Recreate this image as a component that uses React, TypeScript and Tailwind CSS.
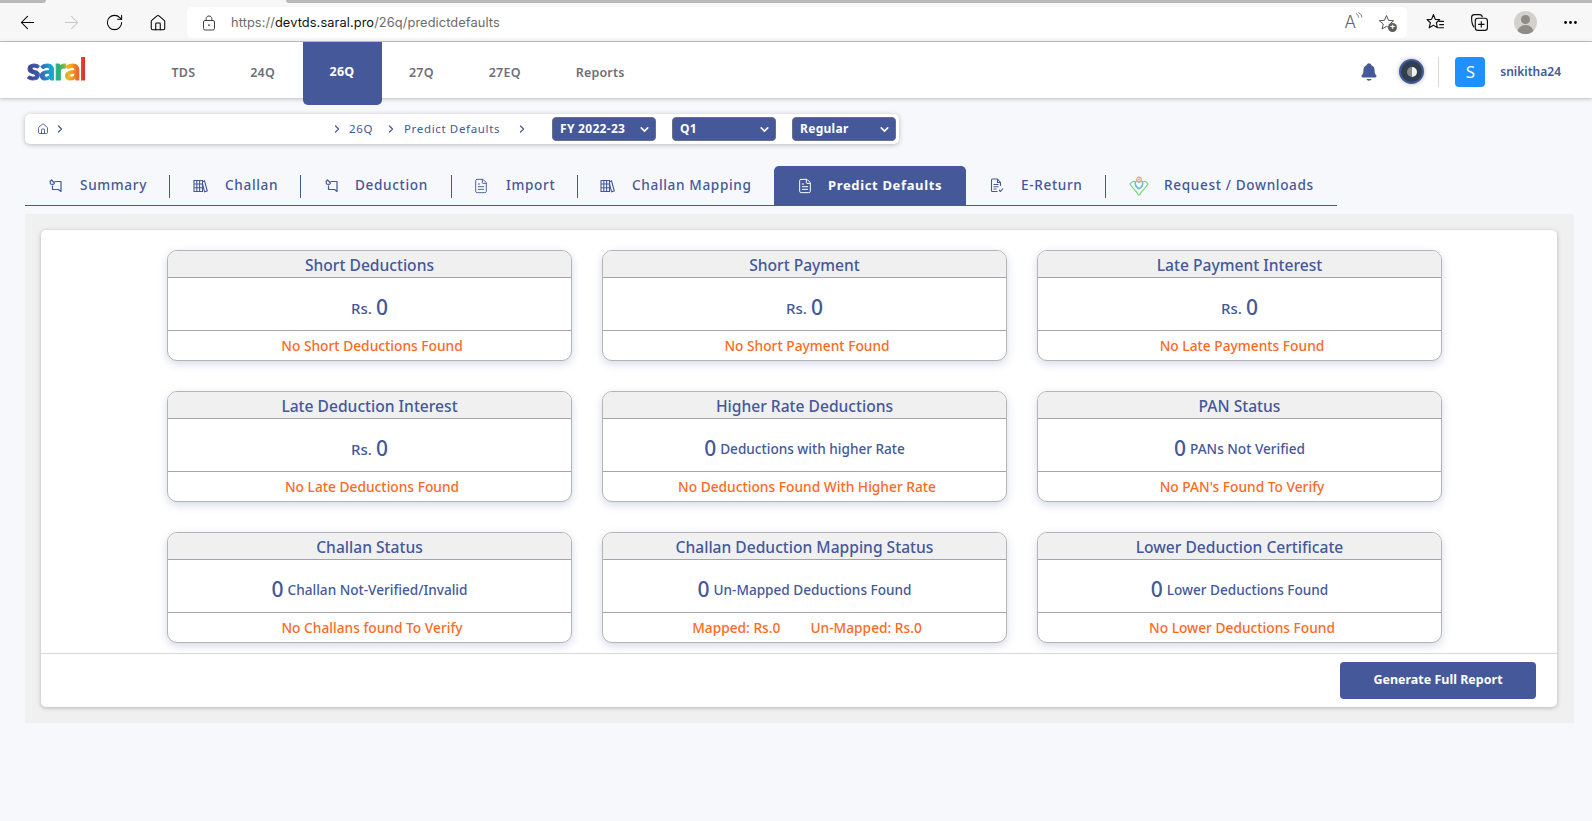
import React from "react";
import { ArrowLeft, ArrowRight, RotateCw, House, ChevronRight, ChevronDown, Ellipsis, FileText } from "lucide-react";
import { IoNotifications } from "react-icons/io5";

function SummaryIcon({ className }: { className?: string }) {
  return (
    <svg viewBox="0 0 14 14" className={className} fill="none" stroke="currentColor" strokeWidth="1.2" strokeLinejoin="round">
      <path d="M1 2.500 2.500 1 5.500 4 4 5.500 1.500 5Z" />
      <path d="M5.500 2.500H12V12.500L9.500 10.500H3.500V6.500" />
    </svg>
  );
}

function BooksIcon({ className }: { className?: string }) {
  return (
    <svg viewBox="0 0 15 14" className={className} fill="none" stroke="currentColor" strokeWidth="1.1">
      <path d="M1 1.500H9.500V12.500H1Z" />
      <path d="M3.800 1.500V12.500M6.600 1.500V12.500M1 5H9.500M1 8.800H9.500" />
      <path d="M9.500 3 11.500 1.800 14.300 12 11.600 12.800 9.500 5" />
    </svg>
  );
}

function ReturnIcon({ className }: { className?: string }) {
  return (
    <svg viewBox="0 0 14 15" className={className} fill="none" stroke="currentColor" strokeWidth="1.1" strokeLinejoin="round">
      <path d="M7.500 13.500H2.500C1.800 13.500 1.500 13.200 1.500 12.500V2C1.500 1.300 1.800 1 2.500 1H7.500L10.500 4.500V8" />
      <path d="M7.500 1V4.500H10.500M3.500 6.500H8.500M3.500 8.800H8.500M3.500 11H6.500" />
      <path d="M9 12 10.500 13.500 13 10.500" />
    </svg>
  );
}

function FlowerIcon({ className }: { className?: string }) {
  return (
    <svg viewBox="0 0 20 20" className={className} fill="none" strokeWidth="1.200">
      <path d="M1 8C3 5 5 5 6.500 6 5.500 9 7 12 10 13 13 12 14.500 9 13.500 6 15 5 17 5 19 8 17 12 13 14 10.500 19H9.500C7 14 3 12 1 8Z" stroke="#74d67a" />
      <path d="M6.500 6.500C7 4.500 8 4.500 10 6.500 12 4.500 13 4.500 13.500 6.500 14 9.500 12 11.500 10 12.500 8 11.500 6 9.500 6.500 6.500Z" stroke="#6ab6ec" />
      <circle cx="10" cy="3.500" r="2.300" stroke="#f3a25e" />
      <circle cx="10" cy="3.500" r="1" fill="#7cc5ef" />
    </svg>
  );
}

function PadlockIcon({ className }: { className?: string }) {
  return (
    <svg viewBox="0 0 14 16" className={className} fill="none" stroke="#444" strokeWidth="1">
      <rect x="1.500" y="5.500" width="11" height="9.500" rx="1.500" />
      <path d="M4.200 5.500V3.500C4.200 2 5.400 1 7 1 8.600 1 9.800 2 9.800 3.500V5.500" />
      <circle cx="7" cy="10.200" r="0.900" fill="#444" stroke="none" />
    </svg>
  );
}

function StarPlus() {
  return (
    <span className="relative block w-[18px] h-[18px]">
      <svg viewBox="0 0 18 18" className="w-[18px] h-[18px]" fill="none" stroke="#555" strokeWidth="1" strokeLinejoin="round">
        <path d="M8.500 1.500 10.500 6.300 15.700 6.700 11.700 10 13 15 8.500 12.300 4 15 5.300 10 1.300 6.700 6.500 6.300Z" />
      </svg>
      <span className="absolute -right-[1px] bottom-[0px] w-[9px] h-[9px] rounded-full bg-[#5c5c5c] text-white text-[9px] leading-[8px] text-center font-bold">+</span>
    </span>
  );
}

function Logo() {
  return (
    <div className="w-[59px] h-[24px] pl-[1px] text-[30px] leading-[22px] font-black tracking-[-0.6px] [-webkit-text-stroke:1px_transparent] text-transparent bg-clip-text bg-[linear-gradient(90deg,#3b3f96_0%,#3f5aa8_22%,#12a4d6_42%,#2fb565_58%,#f3b61f_72%,#ee7a22_84%,#e02a2a_100%)] font-['Lato',sans-serif]">
      saral
    </div>
  );
}

function BrowserBar() {
  return (
    <div className="h-[42px] shrink-0 bg-[#f7f7f7] border-b border-[#c4c4c4] flex flex-col relative">
      <div className="h-[3px] flex justify-between bg-[#f7f7f7]">
        <div className="w-[46px] h-[3px] bg-[#b9b9b9] rounded-br-md" />
        <div className="w-[1306px] h-[3px] bg-[#b9b9b9] rounded-bl-md" />
      </div>
      <div className="flex items-center h-[31px] mt-[4px]">
        <ArrowLeft className="ml-[17px] w-[21px] h-[21px] text-black" strokeWidth={1.2} />
        <ArrowRight className="ml-[23px] w-[21px] h-[21px] text-[#c8c8c8]" strokeWidth={1.2} />
        <RotateCw className="ml-[23px] w-[19px] h-[19px] text-black" strokeWidth={1.3} />
        <House className="ml-[25px] w-[18px] h-[18px] text-black" strokeWidth={1.4} />
        <div className="ml-[20px] w-[1220px] h-[31px] bg-white rounded-[5px] flex items-center">
          <PadlockIcon className="ml-[15px] w-[14px] h-[16px]" />
          <div className="ml-[15px] text-[12.8px] tracking-[0.1px] text-[#6b6b6b] font-['Inter',sans-serif]">
            https://<span className="text-[#111]">devtds.saral.pro</span>/26q/predictdefaults
          </div>
          <div className="ml-auto flex items-center mr-[11px]">
            <span className="relative text-[#666] text-[17px] leading-[17px] font-['Inter',sans-serif] font-light mr-[22px]">
              A
              <svg viewBox="0 0 8 8" className="absolute -top-[2px] -right-[7px] w-[8px] h-[8px]" fill="none" stroke="#666" strokeWidth="0.900">
                <path d="M1 1.500C3 2.500 3.500 4 3.500 5.500M3.500 0.500C6 2 6.800 3.500 6.800 5.500" />
              </svg>
            </span>
            <StarPlus />
          </div>
        </div>
        <svg viewBox="0 0 18 18" className="ml-[19px] w-[19px] h-[19px]" fill="none" stroke="#111" strokeWidth="1.1" strokeLinejoin="round">
          <path d="M7 1.500 8.800 6 13 6.300 9.800 9.200 10.800 14 7 11.500 3 14 4.200 9.200 1 6.300 5.300 6Z" />
          <path d="M12 8H17M12.500 11H17M11.500 14H17" />
        </svg>
        <svg viewBox="0 0 18 18" className="ml-[25px] w-[19px] h-[19px]" fill="none" stroke="#111" strokeWidth="1.1" strokeLinejoin="round">
          <path d="M4 13.500C2.500 12 1.500 10 1.500 4.500 1.500 2.500 2.500 1.500 4 1.500H9C11 1.500 11.500 2.500 11.700 4" />
          <rect x="5" y="5" width="11.500" height="11.500" rx="2.500" />
          <path d="M10.700 7.700V13.700M7.700 10.700H13.700" />
        </svg>
        <div className="ml-[25px] w-[23px] h-[23px] rounded-full bg-[#d3d1cd] overflow-hidden flex flex-col items-center">
          <div className="mt-[4px] w-[9px] h-[9px] rounded-full bg-[#8f8c88]" />
          <div className="mt-[1px] w-[17px] h-[9px] rounded-t-full bg-[#8f8c88]" />
        </div>
        <Ellipsis className="ml-[25px] w-[17px] h-[17px] text-black" strokeWidth={2} />
      </div>
    </div>
  );
}

const navItems = ["TDS", "24Q", "26Q", "27Q", "27EQ", "Reports"];

function AppHeader() {
  return (
    <div className="h-[56px] shrink-0 bg-white shadow-[0_1px_4px_rgba(0,0,0,0.25)] flex items-start relative z-10">
      <div className="ml-[26px] mt-[15px] w-[118px]">
        <Logo />
      </div>
      <div className="flex text-[12.5px] font-semibold tracking-[0.2px]">
        {navItems.map((n) =>
          n === "26Q" ? (
            <div key={n} className="h-[63px] w-[79px] flex items-center justify-center pb-[3px] rounded-b-[5px] bg-[#44589a] text-white font-bold">
              {n}
            </div>
          ) : (
            <div key={n} className="h-[56px] pt-[6px] px-[27.5px] flex items-center text-[#6f6f7a]">
              {n}
            </div>
          )
        )}
      </div>
      <div className="ml-auto flex items-center h-[56px] pt-[3px]">
        <IoNotifications className="w-[20px] h-[20px] text-[#44589a]" />
        <div className="ml-[20px] w-[25px] h-[25px] rounded-full bg-[#2f3f4f] border-[2px] border-[#44589a] flex items-center justify-center shadow-[0_0_4px_rgba(0,0,0,0.3)]">
          <div className="w-[10px] h-[10px] rounded-full bg-[linear-gradient(90deg,#8a8a8a_50%,#f1f1f1_50%)]" />
        </div>
        <div className="ml-[14px] w-px h-[30px] bg-[#d8d8d8]" />
        <div className="ml-[16px] w-[30px] h-[30px] rounded-[4px] bg-[#1e90ff] text-white text-[17px] flex items-center justify-center">S</div>
        <div className="ml-[15px] mr-[31px] text-[12px] font-semibold text-[#44589a]">snikitha24</div>
      </div>
    </div>
  );
}

function Select({ label }: { label: string }) {
  return (
    <div className="w-[104px] h-[24px] rounded-[4px] bg-[#44589a] border border-[#6b6f80] text-white text-[12px] tracking-[0.3px] font-bold flex items-center justify-between pl-[7px] pr-[4px]">
      <span>{label}</span>
      <ChevronDown className="w-[13px] h-[13px]" strokeWidth={3} />
    </div>
  );
}

function Breadcrumb() {
  const chev = "w-[12px] h-[12px] text-[#44589a]";
  return (
    <div className="ml-[25px] mt-[16px] w-[874px] h-[30px] bg-white rounded-[5px] shadow-[0_1px_5px_rgba(0,0,0,0.25)] flex items-center text-[11.5px] tracking-[0.65px] text-[#44589a]">
      <House className="ml-[12px] w-[12px] h-[12px]" strokeWidth={1.8} />
      <ChevronRight className={`ml-[5px] ${chev}`} strokeWidth={2.4} />
      <div className="w-[265px]" />
      <ChevronRight className={chev} strokeWidth={2.4} />
      <span className="ml-[6px] w-[36px]">26Q</span>
      <ChevronRight className={chev} strokeWidth={2.4} />
      <span className="ml-[7px] w-[112px] whitespace-nowrap">Predict Defaults</span>
      <ChevronRight className={chev} strokeWidth={2.4} />
      <div className="ml-[24px] flex gap-[16px]">
        <Select label="FY 2022-23" />
        <Select label="Q1" />
        <Select label="Regular" />
      </div>
    </div>
  );
}

const tabs: { label: string; icon: (c: string) => React.ReactNode; w: number; sep: boolean; active?: boolean; gap: number; pl: number }[] = [
  { label: "Summary", icon: (c) => <SummaryIcon className={`w-[14px] h-[14px] ${c}`} />, w: 145, pl: 24, gap: 17, sep: true },
  { label: "Challan", icon: (c) => <BooksIcon className={`w-[15px] h-[14px] ${c}`} />, w: 131, pl: 23, gap: 17, sep: true },
  { label: "Deduction", icon: (c) => <SummaryIcon className={`w-[14px] h-[14px] ${c}`} />, w: 151, pl: 24, gap: 16, sep: true },
  { label: "Import", icon: (c) => <FileText className={`w-[16px] h-[16px] ${c}`} strokeWidth={1.4} />, w: 126, pl: 21, gap: 17, sep: true },
  { label: "Challan Mapping", icon: (c) => <BooksIcon className={`w-[15px] h-[14px] ${c}`} />, w: 196, pl: 22, gap: 17, sep: false },
  { label: "Predict Defaults", icon: (c) => <FileText className={`w-[16px] h-[16px] ${c}`} strokeWidth={1.5} />, w: 192, pl: 23, gap: 15, sep: false, active: true },
  { label: "E-Return", icon: (c) => <ReturnIcon className={`w-[14px] h-[15px] ${c}`} />, w: 140, pl: 24, gap: 17, sep: true },
  { label: "Request / Downloads", icon: (c) => <FlowerIcon className={`w-[20px] h-[20px] ${c}`} />, w: 231, pl: 23, gap: 15, sep: false },
];

function Tabs() {
  return (
    <div className="ml-[25px] mt-[22px] w-[1312px] h-[40px] border-b border-[#44589a] flex text-[13.6px] tracking-[0.65px] font-medium">
      {tabs.map((t) => (
        <div
          key={t.label}
          style={{ width: t.w, paddingLeft: t.pl }}
          className={
            t.active
              ? "h-[40px] flex items-center rounded-t-[5px] bg-[#44589a] text-white text-[13px] font-bold"
              : "h-[39px] flex items-center relative text-[#44589a]"
          }
        >
          {t.icon("shrink-0")}
          <span style={{ marginLeft: t.gap }} className="whitespace-nowrap">
            {t.label}
          </span>
          {t.sep && <span className="absolute right-0 top-[9px] h-[23px] w-px bg-[#44589a]" />}
        </div>
      ))}
    </div>
  );
}

type CardData = { title: string; value: React.ReactNode; foot: React.ReactNode };

const rs = (
  <>
    <span className="text-[15px]">Rs.</span> <span className="text-[21px]">0</span>
  </>
);
const num = (t: string) => (
  <>
    <span className="text-[21px]">0</span> <span className="text-[13.6px]">{t}</span>
  </>
);

const cards: CardData[] = [
  { title: "Short Deductions", value: rs, foot: "No Short Deductions Found" },
  { title: "Short Payment", value: rs, foot: "No Short Payment Found" },
  { title: "Late Payment Interest", value: rs, foot: "No Late Payments Found" },
  { title: "Late Deduction Interest", value: rs, foot: "No Late Deductions Found" },
  { title: "Higher Rate Deductions", value: num("Deductions with higher Rate"), foot: "No Deductions Found With Higher Rate" },
  { title: "PAN Status", value: num("PANs Not Verified"), foot: "No PAN's Found To Verify" },
  { title: "Challan Status", value: num("Challan Not-Verified/Invalid"), foot: "No Challans found To Verify" },
  {
    title: "Challan Deduction Mapping Status",
    value: num("Un-Mapped Deductions Found"),
    foot: (
      <span className="flex gap-[30px]">
        <span>Mapped: Rs.0</span>
        <span>Un-Mapped: Rs.0</span>
      </span>
    ),
  },
  { title: "Lower Deduction Certificate", value: num("Lower Deductions Found"), foot: "No Lower Deductions Found" },
];

function Card({ c }: { c: CardData }) {
  return (
    <div className="h-[111px] rounded-[10px] border border-[#b4b4b8] bg-white shadow-[0_3px_8px_rgba(68,88,154,0.22)] overflow-hidden flex flex-col">
      <div className="h-[27px] shrink-0 pt-[3px] bg-[#f0f0f0] border-b border-[#a4a4aa] flex items-center justify-center text-[15.6px] font-medium text-[#44589a]">
        {c.title}
      </div>
      <div className="h-[53px] shrink-0 pt-[8px] border-b border-[#a4a4aa] flex items-center justify-center gap-[4px] text-[#44589a] font-medium whitespace-pre">
        {c.value}
      </div>
      <div className="flex-1 pt-[2px] pl-[5px] flex items-center justify-center text-[13.75px] font-medium text-[#ff6a1f]">{c.foot}</div>
    </div>
  );
}

export default function App() {
  return (
    <div className="w-[1592px] h-[821px] overflow-hidden bg-[#f7f8fb] flex flex-col font-['Noto_Sans',sans-serif]">
      <BrowserBar />
      <AppHeader />
      <Breadcrumb />
      <Tabs />
      <div className="ml-[25px] mt-[8px] w-[1549px] h-[509px] bg-[#f0f0f0] pt-[16px] pl-[16px]">
        <div className="w-[1516px] h-[477px] bg-white rounded-[5px] shadow-[0_1px_4px_rgba(0,0,0,0.25)] flex flex-col">
          <div className="h-[424px] shrink-0 border-b border-[#d8d8d8] pt-[20px] pl-[126px]">
            <div className="grid grid-cols-[405px_405px_405px] gap-x-[30px] gap-y-[30px]">
              {cards.map((c) => (
                <Card key={c.title} c={c} />
              ))}
            </div>
          </div>
          <div className="flex justify-end pt-[8px] pr-[21px]">
            <div className="w-[196px] h-[37px] rounded-[4px] bg-[#44589a] text-white text-[12.5px] font-bold flex items-center justify-center">
              Generate Full Report
            </div>
          </div>
        </div>
      </div>
    </div>
  );
}
